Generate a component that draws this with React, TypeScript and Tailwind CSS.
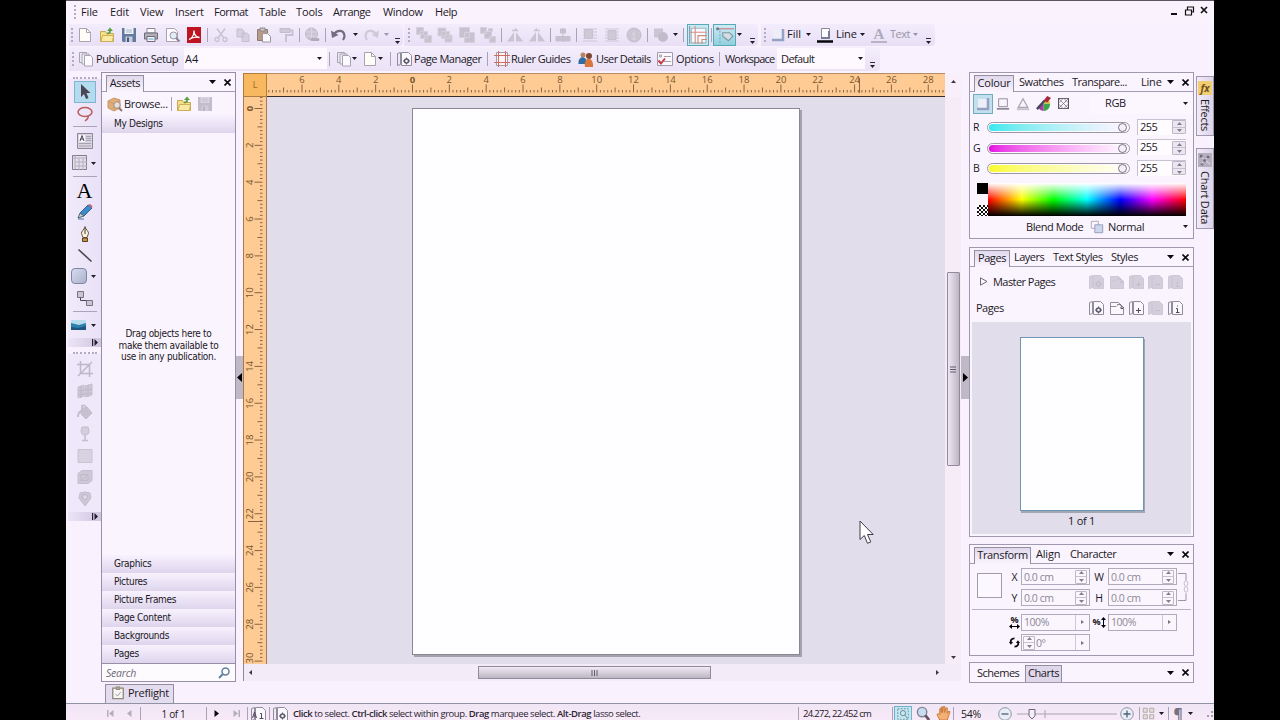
import clsx from "clsx"
import type { ReactNode } from "react"

type BoxProps = { className?: string; children?: ReactNode }

const Slot = ({ className, children }: BoxProps) => (
  <div
    className={clsx(
      "flex shrink-0 items-center justify-center whitespace-nowrap",
      className,
    )}
  >
    {children}
  </div>
)

const Label = ({ className, children }: BoxProps) => (
  <span className={clsx("block shrink-0 whitespace-nowrap", className)}>
    {children}
  </span>
)

const Sep = ({ className }: BoxProps) => (
  <Slot className={className}>
    <div className="h-3.5 w-px bg-[#aaa2b6]" />
  </Slot>
)

const Tri = ({ className }: BoxProps) => (
  <Slot className={className}>
    <svg className="h-[3px] w-[5px] fill-current" viewBox="0 0 5 3">
      <path d="M0 0h5L2.500 3z" />
    </svg>
  </Slot>
)

const Chevron = ({ className }: BoxProps) => (
  <Slot className={clsx("self-stretch pt-[12px]", className)}>
    <svg className="h-2 w-[7px]" viewBox="0 0 7 8">
      <path d="M1 1.500h5" stroke="#332e3c" />
      <path d="M1 4h5L3.500 7z" fill="#221e2b" />
    </svg>
  </Slot>
)

const Grip = ({ className }: BoxProps) => (
  <Slot className={className}>
    <div className="h-3.5 w-0 border-l-2 border-dotted border-[#b3abc2]" />
  </Slot>
)

const Icon = ({ className, children }: BoxProps) => (
  <svg
    className={clsx("size-4 shrink-0", className)}
    viewBox="0 0 16 16"
    fill="none"
    stroke="#8b8596"
  >
    {children}
  </svg>
)

const PageIcon = () => (
  <Icon>
    <path d="M2.500 1.500h7l4 4v9h-11z" fill="#fffdf8" stroke="#a9a3b0" />
    <path d="M9.500 1.500v4h4" stroke="#a9a3b0" />
  </Icon>
)

const FolderIcon = () => (
  <Icon>
    <path d="M1.500 4.500h5l1 2h7v8h-13z" fill="#f8df86" stroke="#c9a955" />
    <path d="M2 14.500l1.500-6h11l-1 6z" fill="#fbeaa2" stroke="#cfae5c" />
    <path d="M8 6.500c3 0 3-1 3-3" stroke="#5da044" strokeWidth="2" />
    <path d="M8 4l3-3.500L14 4z" fill="#5da044" stroke="none" />
  </Icon>
)

const SaveIcon = ({ off = false }: { off?: boolean }) => (
  <Icon>
    <path
      d="M1 1h14v14H2l-1-1z"
      fill={off ? "#c2bdcb" : "#65799e"}
      stroke="none"
    />
    <path d="M3.500 1h9v6h-9z" fill={off ? "#d9d4e1" : "#eef2fa"} stroke="none" />
    <path d="M5 3h6M5 5h6" stroke={off ? "#c6c0ce" : "#a8b2c6"} />
    <path d="M4.500 9.500h7V15h-7z" fill={off ? "#d0cbd7" : "#c5cfdf"} stroke="none" />
    <path d="M6 10.500h2V15H6z" fill={off ? "#b9b3c3" : "#46597d"} stroke="none" />
  </Icon>
)

const PrintIcon = () => (
  <Icon>
    <path d="M4 1.500h8V6H4z" fill="#fff" />
    <path d="M1.500 6h13v6h-13z" fill="#b2afb9" stroke="#6e6a77" />
    <path d="M4 9.500h8v5H4z" fill="#f7f6fa" stroke="#6e6a77" />
    <path d="M5.500 12h5" stroke="#5aa0d0" />
  </Icon>
)

const PreviewIcon = () => (
  <Icon>
    <path d="M1.500 1.500h8l3 3v10h-11z" fill="#fdfbff" stroke="#a9a3b0" />
    <circle cx="8.500" cy="8.500" r="3.500" fill="#e4edf6" stroke="#9a94a2" />
    <path d="M11 11l3.500 3.500" stroke="#8a838e" strokeWidth="2" />
  </Icon>
)

const PdfIcon = () => (
  <Icon>
    <path d="M1 0h14v16H1z" fill="#bd1420" stroke="none" />
    <path
      d="M3 12.500c3-1 5-5 5-9 0 4 2 6.500 5.500 7-3-.8-7-.2-10.500 2z"
      stroke="#fff"
      strokeWidth="1.300"
    />
  </Icon>
)

const CutIcon = () => (
  <Icon>
    <path d="M4 1.500l6.500 9M12 1.500l-6.500 9" stroke="#c8c2d3" strokeWidth="1.500" />
    <circle cx="4" cy="12.500" r="2" stroke="#c8c2d3" strokeWidth="1.300" />
    <circle cx="12" cy="12.500" r="2" stroke="#c8c2d3" strokeWidth="1.300" />
  </Icon>
)

const CopyIcon = () => (
  <Icon>
    <path d="M2 2h5l2 2v6H2zM7 6h4.500L14 8v6.500H7z" fill="#d5cfdf" stroke="#c6bfd1" />
  </Icon>
)

const PasteIcon = () => (
  <Icon>
    <path d="M1.500 2.500h10v11h-10z" fill="#b69a8b" stroke="#94796d" />
    <path d="M4 1h5v3H4z" fill="#ccc6ce" stroke="#8d8791" />
    <path d="M6.500 6.500h5l3 3v5.500h-8z" fill="#fbf9fd" stroke="#9c96a3" />
  </Icon>
)

const BrushIcon = () => (
  <Icon>
    <path d="M2 1.500h10v4H2z" fill="#cfc9d8" stroke="#c4bdcf" />
    <path d="M12 3.500h2.500v4.500H8v7" stroke="#c8c1d2" strokeWidth="2" />
  </Icon>
)

const GlobeIcon = () => (
  <Icon>
    <circle cx="7.500" cy="7" r="6" fill="#c9c5d4" stroke="#c0bacb" />
    <path d="M2 5h11M2 9h11M7.500 1v12" stroke="#dbd6e2" />
    <path d="M8 12.500h2m2 0h2" stroke="#b1abbc" strokeWidth="3" strokeLinecap="round" />
  </Icon>
)

const UndoIcon = ({ redo = false }: { redo?: boolean }) => (
  <Icon className={redo ? "-scale-x-100" : ""}>
    <path
      d="M3 7.500C6 2.500 13 2.500 13.500 9c0 1.500-.5 2.500-1.500 4"
      stroke={redo ? "#cfc9d8" : "#716e80"}
      strokeWidth="2.200"
    />
    <path d="M0 3.500l1 7.500 6.500-3z" fill={redo ? "#cfc9d8" : "#716e80"} stroke="none" />
  </Icon>
)

const StackIcon = ({ front = "back" }: { front?: string }) => (
  <Icon>
    <g fill="#c7c2d0" stroke="#d6d0de">
      {front === "front" && <path d="M1 1h8v8H1zM8 8h7v7H8zM4.500 4.500h8v7h-8z" />}
      {front === "back" && <path d="M.5.500h7v7h-7zM8.500 8.500h7v7h-7zM4.500 4.500h7v7h-7z" />}
      {front === "forward" && <path d="M.5.500h10v10H.5zM5.500 5.500h10v10h-10z" />}
      {front === "rear" && <path d="M.5.500h6v6h-6zM4.500 4.500h7v7h-7zM9.500 9.500h6v6h-6zM8.500 1.500h4v3h-4z" />}
    </g>
  </Icon>
)

const FlipIcon = ({ flipped = false }: { flipped?: boolean }) => (
  <Icon className={flipped ? "-scale-x-100" : ""}>
    <path d="M0 14.500L7 5v9.500zM9 14.500V5l7 9.500z" fill="#c9c3d2" stroke="none" />
    <path d="M5 3.500h5l-2-2" stroke="#c9c3d2" strokeWidth="1.500" />
  </Icon>
)

const AlignIcon = () => (
  <Icon>
    <path d="M5 1.500h6v5H5zM.5 9h15v5.500H.5z" fill="#c6c1cf" stroke="none" />
    <path d="M8 1v14" stroke="#c2bccb" />
  </Icon>
)

const WrapIcon = ({ square = false }: { square?: boolean }) => (
  <Icon>
    <path d="M1 2h14M1 5h14M1 8h14M1 11h14M1 14h14" stroke="#cdc7d6" />
    <path d={square ? "M4 3.500h8v9H4z" : "M2.500 2.500h8v9h-8z"} fill="#cec8d7" stroke="#c6c0d0" />
  </Icon>
)

const BallIcon = () => (
  <Icon>
    <circle cx="8" cy="8" r="7" fill="#cbc6d4" stroke="#c3bdcc" />
    <path d="M8 4v8M6 12h4M6 7h2" stroke="#dcd7e4" />
  </Icon>
)

const MergeIcon = () => (
  <Icon>
    <path d="M1 1.500h9v9H1z" fill="#cbc6d3" stroke="none" />
    <circle cx="10" cy="10" r="5" fill="#c1bccb" stroke="none" />
  </Icon>
)

const GuidesIcon = () => (
  <Icon className="size-[18px]">
    <path d="M2 2h13v13H2z" fill="#f6fafe" stroke="#9eb6c4" />
    <path d="M0 5.500h16M5.500 0v16" stroke="#d99087" />
    <path d="M8 16V8.500h8M11.500 16v-4H16" stroke="#d08c74" />
    <path d="M.5 0v16" stroke="#8aa3b3" />
  </Icon>
)

const SnapIcon = () => (
  <Icon className="size-[18px]">
    <path d="M0 2.500h16" stroke="#c77b84" />
    <path d="M3.500 4v12" stroke="#86aebb" strokeDasharray="2 1" />
    <path d="M6 6h6l3 3-4 4-5-4z" fill="#d5dde4" stroke="#7c98a5" />
    <circle cx="1.500" cy="2.500" r="1.500" fill="#6d8593" stroke="none" />
  </Icon>
)

const FillIcon = () => (
  <Icon>
    <path d="M3 3h10v9.500H3z" fill="#eeeef8" stroke="none" />
    <path d="M13 2v11H2" stroke="#94a1c2" strokeWidth="2.500" />
  </Icon>
)

const LineIcon = () => (
  <Icon>
    <path d="M4.500 1.500h8v9h-8z" fill="#fdfdff" stroke="#8d8b9b" />
    <path d="M12 4v7H4" stroke="#787b94" strokeWidth="2" />
    <path d="M0 14.500h16" stroke="#08060c" strokeWidth="2.500" />
  </Icon>
)

const PagesStackIcon = () => (
  <Icon>
    <path d="M1.500 1.500h7v10h-7z" fill="#eceaf2" stroke="#a8a3b2" />
    <path d="M4 3h7v10H4z" fill="#f3f1f7" stroke="#a8a3b2" />
    <path d="M6.500 4.500h6l2 2v8.500h-8z" fill="#fdfbff" stroke="#a8a3b2" />
  </Icon>
)

const GearPageIcon = ({ off = false }: { off?: boolean }) => (
  <Icon>
    <path d="M.5 2.500l3-1v12l-3 1z" stroke={off ? "#cdc7d6" : "#918c9b"} fill={off ? "#d3cddc" : "none"} />
    <path d="M4.500 1.500h7l3 3v10h-10z" stroke={off ? "#cdc7d6" : "#918c9b"} fill={off ? "#d3cddc" : "#faf7fd"} />
    <circle cx="9.500" cy="10" r="2" stroke={off ? "#c4bece" : "#5d5969"} strokeWidth="1.500" />
    <path d="M9.500 6.500V8M9.500 12v1.500M6 10h1.500M11.500 10H13" stroke={off ? "#c4bece" : "#5d5969"} />
  </Icon>
)

const SheetIcon = ({ off = false, children }: { off?: boolean; children?: ReactNode }) => (
  <Icon>
    <path d="M.5 2.500l3-1v12l-3 1z" stroke={off ? "#cdc7d6" : "#918c9b"} fill={off ? "#d3cddc" : "none"} />
    <path d="M4.500 1.500h7l3 3v10h-10z" stroke={off ? "#cdc7d6" : "#918c9b"} fill={off ? "#d3cddc" : "#faf7fd"} />
    <g stroke={off ? "#c4bece" : "#4e4a5a"}>{children}</g>
  </Icon>
)

const OpenPageIcon = ({ off = false }: { off?: boolean }) => (
  <Icon>
    <path
      d="M1.500 14.500v-12h8l5 5v7zM1.500 6.500h6"
      stroke={off ? "#cdc7d6" : "#918c9b"}
      fill={off ? "#d3cddc" : "#faf7fd"}
    />
    <path d="M8 5c4-1.500 5 1 5 4M11 7.500l2 1.500 2-2" stroke={off ? "#c6c0d0" : "#5a5566"} />
  </Icon>
)

const PageTools = ({ master = false }: { master?: boolean }) => (
  <>
    <Slot className="w-5">
      <GearPageIcon off={master} />
    </Slot>
    <Slot className="w-5">
      <OpenPageIcon off={master} />
    </Slot>
    <Slot className="w-[19px]">
      <SheetIcon off={master}>
        <path d="M9.500 8v5M7 10.500h5" />
      </SheetIcon>
    </Slot>
    <Slot className="w-5">
      <SheetIcon off>
        <path d="M7 10.500h5" />
      </SheetIcon>
    </Slot>
    <Slot className="w-5">
      <SheetIcon off={master}>
        <path d="M8 8.500h1.500v4M8 12.500h3.500M9 6h1" />
      </SheetIcon>
    </Slot>
  </>
)

const RulerGuidesIcon = () => (
  <Icon>
    <path d="M2.500 1.500h11v13h-11z" fill="#fdf5f7" stroke="#a79ba4" />
    <path d="M4.500 0v16M11.500 0v16M0 4.500h16M0 11.500h16" stroke="#cc6c64" />
  </Icon>
)

const UsersIcon = () => (
  <Icon>
    <circle cx="5" cy="4" r="2.500" fill="#b9835f" stroke="none" />
    <path d="M.5 13c-1-9 9-9 8.500 0z" fill="#2f6ea5" stroke="none" />
    <circle cx="11" cy="5" r="3" fill="#7d4630" stroke="none" />
    <path d="M7 16c-2-11 9-11 8 0z" fill="#d8763d" stroke="none" />
  </Icon>
)

const OptionsIcon = () => (
  <Icon>
    <path d="M.5 1.500h15v13H.5z" fill="#fbf8fd" stroke="#a19ca9" />
    <path d="M2.500 4h2v2h-2zM7 5.500h7M7 10.500h7" stroke="#a39eac" />
    <path d="M1.500 9.500l2.500 3 4-5" stroke="#c43a46" strokeWidth="2" />
  </Icon>
)

const BrowseIcon = () => (
  <Icon>
    <path d="M1 5l6-3 6 2v8l-6 3-6-3z" fill="#e0ad77" stroke="#c99a69" />
    <path d="M1 5l6 3 6-4M7 8v6" stroke="#c99a69" />
    <circle cx="10" cy="9" r="3.200" fill="#e6dfdf" stroke="#a39186" />
    <path d="M12 12l3 3" stroke="#8b776d" strokeWidth="2" />
  </Icon>
)

const PanelButtons = () => (
  <>
    <svg className="h-[4px] w-[7px]" viewBox="0 0 7 4">
      <path d="M0 0h7L3.500 4z" fill="#0c0812" />
    </svg>
    <svg className="ml-[8px] size-[7px]" viewBox="0 0 7 7">
      <path d="M.5.5l6 6M6.500.5l-6 6" stroke="#0c0812" strokeWidth="1.600" />
    </svg>
  </>
)

const ActiveTab = ({ className, children }: BoxProps) => (
  <div
    className={clsx(
      "mt-0.5 flex h-[17px] shrink-0 items-center justify-center self-start border border-b-0 border-[#958ea3] bg-gradient-to-b from-[#e0d9ec] to-[#faf4fe] pb-[2px] whitespace-nowrap",
      className,
    )}
  >
    {children}
  </div>
)

const MenuBar = () => (
  <div className="flex h-6 items-center border-t border-[#5b5562] bg-[#faf3fe] pb-[2px] pl-[3px] tracking-[-0.15px]">
    <Grip className="w-3" />
    <Label className="w-[29px]">File</Label>
    <Label className="w-[30px]">Edit</Label>
    <Label className="w-[35px]">View</Label>
    <Label className="w-[39px]">Insert</Label>
    <Label className="w-[45px] tracking-[-0.5px]">Format</Label>
    <Label className="w-[37px]">Table</Label>
    <Label className="w-[37px]">Tools</Label>
    <Label className="w-[50px] tracking-[-0.5px]">Arrange</Label>
    <Label className="w-[52px] tracking-[-0.3px]">Window</Label>
    <Label className="w-[30px] tracking-[-0.4px]">Help</Label>
    <svg className="mt-[-2px] mr-[5px] ml-auto h-3 w-[38px]" viewBox="0 0 38 12" fill="none" stroke="#111">
      <path d="M0 9h6" strokeWidth="2" />
      <path d="M16.500 5V2h6v5h-2M14.500 5h6v5h-6z" strokeWidth="1.200" />
      <path d="M30 2l6 6M36 2l-6 6" strokeWidth="1.700" />
    </svg>
  </div>
)

const MainToolbar = () => (
  <div className="flex h-[22px] items-center">
    <div className="ml-[3px] flex h-full items-center rounded-r bg-gradient-to-b from-[#f3ecfc] to-[#e8dff5] pb-px">
      <Grip className="w-[5px]" />
      <Slot className="w-[22px]"><PageIcon /></Slot>
      <Slot className="w-[22px]"><FolderIcon /></Slot>
      <Slot className="w-[22px]"><SaveIcon /></Slot>
      <Slot className="w-[22px]"><PrintIcon /></Slot>
      <Slot className="w-[21px]"><PreviewIcon /></Slot>
      <Slot className="w-[21px]"><PdfIcon /></Slot>
      <Sep className="w-[6px]" />
      <Slot className="w-[22px]"><CutIcon /></Slot>
      <Slot className="w-[21px]"><CopyIcon /></Slot>
      <Slot className="w-[22px]"><PasteIcon /></Slot>
      <Slot className="w-[22px]"><BrushIcon /></Slot>
      <Sep className="w-1" />
      <Slot className="w-[22px]"><GlobeIcon /></Slot>
      <Sep className="w-[5px]" />
      <Slot className="w-[21px]"><UndoIcon /></Slot>
      <Tri className="w-3" />
      <Slot className="w-5"><UndoIcon redo /></Slot>
      <Tri className="w-[10px] text-[#9e97aa]" />
      <Chevron className="w-3" />
    </div>
    <div className="ml-px flex h-full items-center rounded-r bg-gradient-to-b from-[#f3ecfc] to-[#e8dff5] pb-px">
      <Grip className="w-[9px]" />
      <Slot className="w-[21px]"><StackIcon /></Slot>
      <Slot className="w-[22px]"><StackIcon front="front" /></Slot>
      <Slot className="w-[21px]"><StackIcon front="forward" /></Slot>
      <Slot className="w-[22px]"><StackIcon front="rear" /></Slot>
      <Sep className="w-[5px]" />
      <Slot className="w-[22px]"><FlipIcon /></Slot>
      <Slot className="w-[22px]"><FlipIcon flipped /></Slot>
      <Sep className="w-1" />
      <Slot className="w-[22px]"><AlignIcon /></Slot>
      <Sep className="w-[5px]" />
      <Slot className="w-[22px]"><WrapIcon /></Slot>
      <Slot className="w-[22px]"><WrapIcon square /></Slot>
      <Slot className="w-[22px]"><BallIcon /></Slot>
      <Sep className="w-[5px]" />
      <Slot className="w-[21px]"><MergeIcon /></Slot>
      <Tri className="w-[9px]" />
      <Sep className="w-[7px]" />
      <Slot className="h-[22px] w-[22px] border border-[#5aa9b9] bg-[#c6e9f4]"><GuidesIcon /></Slot>
      <Sep className="w-1" />
      <Slot className="h-[22px] w-[23px] border border-[#5aa9b9] bg-gradient-to-b from-[#cdeaf5] to-[#8fd0dd]"><SnapIcon /></Slot>
      <Tri className="w-[7px]" />
      <Chevron className="ml-[3px] w-3" />
    </div>
    <div className="ml-[3px] flex h-full items-center rounded-r bg-gradient-to-b from-[#f3ecfc] to-[#e8dff5] pb-px">
      <Grip className="w-[8px]" />
      <Slot className="w-[18px]"><FillIcon /></Slot>
      <Label className="-mt-px w-[17px]">Fill</Label>
      <Tri className="w-[8px]" />
      <Slot className="ml-1 w-[18px]"><LineIcon /></Slot>
      <Label className="-mt-px ml-[2px] w-[22px] tracking-[-0.2px]">Line</Label>
      <Tri className="w-[8px]" />
      <Slot className="ml-1 w-[18px] flex-col text-[#b0aaba]">
        <span className="h-[14px] font-['Liberation_Serif',serif] text-[15px]/[15px] font-bold">A</span>
        <div className="h-[2px] w-4 bg-[#b9b4c3]" />
      </Slot>
      <Label className="-mt-px ml-[2px] w-[22px] tracking-[-0.5px] text-[#9a94a5]">Text</Label>
      <Tri className="w-[7px] text-[#9a94a5]" />
      <Chevron className="ml-[2px] w-[14px]" />
    </div>
  </div>
)

const SetupToolbar = () => (
  <div className="flex h-[26px] items-center">
    <div className="ml-[3px] flex h-[24px] items-center rounded-r bg-gradient-to-b from-[#f3edfc] to-[#ebe2f6] pb-px">
      <Grip className="w-[7px]" />
      <Slot className="w-5"><PagesStackIcon /></Slot>
      <Label className="w-[88px] tracking-[-0.44px]">Publication Setup</Label>
      <div className="flex h-[21px] w-[143px] items-center bg-[#fdf9ff] pl-px">
        <span className="grow">A4</span>
        <Tri className="w-4" />
      </div>
      <Sep className="w-1" />
      <Slot className="ml-1 w-[17px]"><PagesStackIcon /></Slot>
      <Tri className="w-[5px]" />
      <Slot className="ml-1 w-[17px]"><PageIcon /></Slot>
      <Tri className="w-[5px]" />
      <Sep className="w-[14px]" />
      <Slot className="w-[16px]"><GearPageIcon /></Slot>
      <Label className="ml-px w-[69px] tracking-[-0.47px]">Page Manager</Label>
      <Sep className="w-[9px]" />
      <Slot className="w-[19px]"><RulerGuidesIcon /></Slot>
      <Label className="w-[65px] tracking-[-0.5px]">Ruler Guides</Label>
      <Slot className="w-[20px]"><UsersIcon /></Slot>
      <Label className="w-[59px] tracking-[-0.6px]">User Details</Label>
      <Slot className="w-[20px]"><OptionsIcon /></Slot>
      <Label className="ml-px w-[41px] tracking-[-0.4px]">Options</Label>
      <Sep className="w-[4px]" />
      <Label className="ml-1 w-[52px] tracking-[-0.8px]">Workspace</Label>
      <div className="flex h-[21px] w-[88px] items-center bg-[#fdf9ff] pl-1">
        <span className="grow tracking-[-0.6px]">Default</span>
        <Tri className="w-[10px]" />
      </div>
      <Chevron className="w-[15px]" />
    </div>
  </div>
)

const Divider = ({ className }: BoxProps) => (
  <div className={clsx("h-px w-6 shrink-0 bg-[#aba3b9]", className)} />
)

const MoreTools = ({ className }: BoxProps) => (
  <div
    className={clsx(
      "flex h-[9px] w-full shrink-0 items-center justify-end bg-gradient-to-r from-[#ece4f8] to-[#cfc6de] pr-[3px]",
      className,
    )}
  >
    <svg className="h-[7px] w-[6px]" viewBox="0 0 6 7">
      <path d="M0 0h1.200v7H0zM2.500 0v7L6 3.500z" fill="#241f2e" />
    </svg>
  </div>
)

const ToolBox = () => (
  <div className="flex w-[33px] shrink-0 flex-col items-center text-[#221e2b]">
    <div className="mt-[5px] h-0 w-6 border-t-2 border-dotted border-[#b3abc2]" />
    <div className="flex h-[264px] w-full shrink-0 flex-col items-center bg-gradient-to-r from-[#f1eafb] to-[#e9e1f6]">
      <Slot className="mt-[2px] h-[22px] w-[22px] border border-[#7fb5d3] bg-[#b3dcef]">
        <Icon>
          <path d="M4 0v13l3-3 2 5 2.500-1-2-5h4z" fill="#4b4757" stroke="none" />
        </Icon>
      </Slot>
      <Slot className="h-[22px]">
        <Icon>
          <ellipse cx="8" cy="6" rx="7" ry="4.500" stroke="#b95c5b" strokeWidth="1.500" />
          <path d="M11 9.500c1 2-1 4-3 5.500" stroke="#b95c5b" strokeWidth="1.500" />
        </Icon>
      </Slot>
      <Divider className="mt-px" />
      <Slot className="mt-1 h-[20px]">
        <Icon>
          <path d="M.5.5h15v15H.5z" fill="#d7d3df" stroke="#8e8999" />
          <path d="M2 2h6v7H2z" fill="#f9f7fb" stroke="none" />
          <path d="M3 8l2-5.500L7 8M3.700 6h2.600" stroke="#4a4655" />
          <path d="M9 3.500h5M9 5.500h5M9 7.500h5M2 10.500h12M2 13h12" stroke="#a8a3b2" />
        </Icon>
      </Slot>
      <Slot className="h-[24px] w-full justify-start pl-[4px]">
        <Icon>
          <path d="M.5.5h14v14H.5z" fill="#e3dfeb" stroke="#817c8c" />
          <path d="M.5 3h14M3 .5v14M7 3v12M11 3v12M3 7h12M3 11h12" stroke="#b4afbe" />
        </Icon>
        <Tri className="ml-[3px]" />
      </Slot>
      <Divider className="mt-px" />
      <Slot className="mt-[4px] h-[20px] font-['Liberation_Serif',serif] text-[22px]/[20px] text-black">
        A
      </Slot>
      <Slot className="h-[22px]">
        <Icon>
          <path d="M3 9l8-8 4 3-8 8z" fill="#3f8acb" stroke="#2e6398" />
          <path d="M11 1l2-1 2.500 2L15 4z" fill="#c46a74" stroke="none" />
          <path d="M3 9l-2 5 6-2z" fill="#c5cfdb" stroke="#55626f" />
          <path d="M1 15h6" stroke="#4577a4" />
        </Icon>
      </Slot>
      <Slot className="h-[21px]">
        <Icon>
          <path d="M8 .5c.5 3 4 5 3.500 7l-1.500 4H6l-1.500-4C4 5.500 7.500 3.500 8 .5z" fill="#fcf3df" stroke="#655641" />
          <path d="M8 2v6" stroke="#453b31" />
          <path d="M5.500 12h5v3.500h-5z" fill="#c59640" stroke="#594121" />
        </Icon>
      </Slot>
      <Slot className="h-[21px]">
        <Icon>
          <path d="M1.500 2.500l13 12" stroke="#4a4553" strokeWidth="1.600" />
        </Icon>
      </Slot>
      <Slot className="h-[22px] w-full justify-start pl-[3px]">
        <div className="size-4 rounded-sm border border-[#7d86a4] bg-gradient-to-br from-[#d7dcec] to-[#aab2cf]" />
        <Tri className="ml-[4px]" />
      </Slot>
      <Slot className="mt-px h-[22px]">
        <Icon>
          <path d="M.5.5h6v6h-6zM9.500 9.500h6v5h-6z" fill="#c9c6d4" stroke="#777284" />
          <path d="M3.500 6.500v3h6" stroke="#4a4655" />
        </Icon>
      </Slot>
      <Divider className="mt-px" />
      <Slot className="mt-1 h-[18px] w-full justify-start pl-[3px]">
        <Icon>
          <path d="M0 3h15v10H0z" fill="#2d7fae" stroke="none" />
          <path d="M0 3h15v3L8 8 0 6z" fill="#b9dbec" stroke="none" />
          <path d="M0 10l7 1 8-2v4H0z" fill="#1d567f" stroke="none" />
        </Icon>
        <Tri className="ml-[4px]" />
      </Slot>
    </div>
    <MoreTools className="-mt-[5px]" />
    <div className="mt-[5px] h-0 w-6 border-t-2 border-dotted border-[#b3abc2]" />
    <div className="flex w-full flex-col items-center gap-[5.7px] bg-[#efe7fa] pt-[7px] pb-[5px]">
      <Icon>
        <path d="M3.500 0v12.500H16M0 3.500h12.500V16M1 15L15 1" stroke="#bdb7c8" strokeWidth="1.500" />
      </Icon>
      <Icon>
        <path d="M1 4l6-2v11l-6 2zM8 3l7-2v11l-7 2z" fill="#cdc7d6" stroke="#c6c0d0" />
        <path d="M1 8l14-2M1 12l14-2M4 3v12M11 2v12" stroke="#bfb9c9" />
      </Icon>
      <Icon>
        <path d="M4 6l5-4 6 7-6 6-5-5z" fill="#c6c0d0" stroke="#c1bbcb" />
        <path d="M1 13c0-4 1-5 3-6M5 7V2l3-1" stroke="#c1bbcb" strokeWidth="1.800" />
      </Icon>
      <Icon>
        <path d="M5 1h6l1 4c0 3-2 4-4 4S4 8 4 5z" fill="#d3cddc" stroke="#c3bdcd" />
        <path d="M8 9v6M5 14.500h6" stroke="#c3bdcd" strokeWidth="1.500" />
      </Icon>
      <Icon>
        <path d="M1 1.500h14v13H1z" fill="#d7d1e0" stroke="#cac4d4" />
      </Icon>
      <Icon>
        <path d="M1 4.500l4-3h10v10l-4 3H1z" fill="#cdc7d6" stroke="#c5bfcf" />
        <path d="M4 5.500h7v6H4zM4 12l7-7" stroke="#bfb9c9" />
      </Icon>
      <Icon>
        <path d="M8 15L2 7l1-5 5-1 5 1 1 5z" fill="#ccc6d6" stroke="#c4bece" />
        <circle cx="8" cy="6" r="2.500" fill="#dfdae6" stroke="#bab4c4" />
      </Icon>
    </div>
    <MoreTools />
  </div>
)

const DRAWERS = [
  "Graphics",
  "Pictures",
  "Picture Frames",
  "Page Content",
  "Backgrounds",
  "Pages",
]

const Drawer = ({ children }: BoxProps) => (
  <div className="flex h-[18px] shrink-0 items-center bg-gradient-to-b from-[#f8f2fe] to-[#ded5ec] pb-px pl-3 font-['DejaVu_Sans_Condensed','Open_Sans',sans-serif] text-[10px] tracking-[-0.3px]">
    {children}
  </div>
)

const AssetsPanel = () => (
  <div className="flex h-[610px] w-[135px] shrink-0 flex-col border border-[#978fa8] bg-[#faf4fe]">
    <div className="flex h-[19px] shrink-0 items-center border-b border-[#a59db4] pr-[4px]">
      <ActiveTab className="ml-[4px] w-[38px] tracking-[-0.4px]">Assets</ActiveTab>
      <div className="ml-auto flex items-center"><PanelButtons /></div>
    </div>
    <div className="flex h-[23px] shrink-0 items-center pl-[4px]">
      <Slot className="w-[17px]"><BrowseIcon /></Slot>
      <Label className="w-[44px] pl-px tracking-[-0.35px]">Browse...</Label>
      <Sep className="w-[9px]" />
      <Slot className="w-[16px]"><FolderIcon /></Slot>
      <Slot className="ml-1 w-[18px]"><SaveIcon off /></Slot>
    </div>
    <Drawer>My Designs</Drawer>
    <p className="grow pt-[195px] text-center font-['DejaVu_Sans_Condensed','Open_Sans',sans-serif] text-[10px]/[11.7px] tracking-[-0.3px]">
      Drag objects here to
      <br />
      make them available to
      <br />
      use in any publication.
    </p>
    {DRAWERS.map((name) => (
      <Drawer key={name}>{name}</Drawer>
    ))}
    <div className="flex h-[18px] shrink-0 items-center border-t border-[#978fa8] bg-[#fefbff] pr-[5px] pl-1 text-[10.5px] text-[#6f6978]">
      <span className="grow tracking-[-0.2px] italic">Search</span>
      <svg className="size-3" viewBox="0 0 12 12" fill="none" stroke="#5f7fa3">
        <circle cx="7.500" cy="4.500" r="3.500" strokeWidth="1.500" />
        <path d="M5 7l-4 4" strokeWidth="2" />
      </svg>
    </div>
  </div>
)

const UNIT = 18.42

const range = (from: number, to: number) =>
  Array.from({ length: to - from + 1 }, (_, i) => from + i)

// five ticks to the centimetre, numbers on every second one
const tickLength = (i: number) => {
  if (i % 10 === 0) {
    return 8
  }

  return i % 5 === 0 ? 5 : 2.5
}

const TopRuler = () => (
  <svg
    className="h-6 w-[678px] shrink-0 border-y border-t-[#b98d63] border-b-[#3a2c26] bg-[#fdcb93]"
    viewBox="0 0 678 22"
    stroke="#8a6440"
  >
    {range(-39, 144).map((i) => {
      const x = 145.5 + (i * UNIT) / 5
      return <path key={i} d={`M${x} ${18.5 - tickLength(i)}V18.500`} />
    })}
    <path d="M592.500 4v15" />
    {range(-3, 14).map((i) => (
      <text
        key={i}
        x={145.5 + i * 2 * UNIT}
        y="9"
        textAnchor="middle"
        fontSize="9.500"
        fontWeight={i === 0 ? 700 : 400}
        fill="#7b542d"
        stroke="none"
      >
        {Math.abs(i * 2)}
      </text>
    ))}
  </svg>
)

const SideRuler = () => (
  <svg
    className="h-[567px] w-6 shrink-0 border-x border-[#a97a4c] bg-[#fdcb93]"
    viewBox="0 0 22 567"
    stroke="#8a6440"
  >
    {range(-3, 150).map((i) => {
      const y = 11.5 + (i * UNIT) / 5
      return <path key={i} d={`M${18.5 - tickLength(i)} ${y}H18.500`} />
    })}
    <path d="M4 424.500h15" />
    {range(0, 15).map((i) => (
      <text
        key={i}
        transform={`translate(9 ${Math.min(11.5 + i * 2 * UNIT, 561)}) rotate(-90)`}
        textAnchor="middle"
        fontSize="9.500"
        fontWeight={i === 0 ? 700 : 400}
        fill="#7b542d"
        stroke="none"
      >
        {i * 2}
      </text>
    ))}
  </svg>
)

const Splitter = ({ right = false }: { right?: boolean }) => (
  <div className={clsx("flex shrink-0 flex-col pt-[284px]", right ? "w-2" : "w-[7px]")}>
    <div className="flex h-[43px] items-center justify-center bg-[#bfb9c7]">
      <svg className={clsx("h-[9px] w-[5px]", right && "rotate-180")} viewBox="0 0 5 9">
        <path d="M5 0v9L0 4.500z" />
      </svg>
    </div>
  </div>
)

const Workspace = () => (
  <div className="relative flex w-[718px] shrink-0 flex-col">
    <div className="mt-px flex">
      <div className="flex h-6 w-6 items-center justify-center border border-[#b07d40] bg-[#f7b85f] text-[9px] text-[#9b6b28]">
        L
      </div>
      <TopRuler />
      <div className="flex h-6 w-4 justify-center bg-[#f8effb] pt-[7px]">
        <svg className="h-1 w-[5px]" viewBox="0 0 5 4"><path d="M0 3h5L2.500 0z" fill="#3b3546" /></svg>
      </div>
    </div>
    <div className="flex h-[567px]">
      <SideRuler />
      <div className="w-[678px] bg-[#e2ddea] pt-[11px] pl-[145px]">
        <div className="h-[547px] w-[388px] border border-[#8a8694] bg-[#fefdff] shadow-[2px_2px_0_#a5a1ad]" />
      </div>
      <div className="flex w-4 flex-col items-center bg-[#f5ecf8] pt-[175px]">
        <div className="flex h-[194px] w-[13px] items-center justify-center rounded-[1px] border border-[#918a9d] bg-gradient-to-r from-[#eee7f3] to-[#bdb6c5]">
          <svg className="h-[7px] w-[6px]" viewBox="0 0 6 7"><path d="M0 1h6M0 3.500h6M0 6h6" stroke="#625c6d" /></svg>
        </div>
        <svg className="mt-auto mb-[5px] h-[3px] w-[5px]" viewBox="0 0 5 3"><path d="M0 0h5L2.500 3z" fill="#3b3546" /></svg>
      </div>
    </div>
    <div className="flex h-[17px] w-[718px] items-center border-l border-[#8f889c] bg-[#f3ebf7] pl-[5px]">
      <svg className="h-[5px] w-[3px]" viewBox="0 0 3 5"><path d="M3 0v5L0 2.500z" fill="#3b3546" /></svg>
      <div className="ml-[226px] flex h-[13px] w-[233px] items-center justify-center border border-[#918a9d] bg-gradient-to-b from-[#f2ebf5] to-[#bcb6c4]">
        <svg className="h-[6px] w-[7px]" viewBox="0 0 7 6"><path d="M1 0v6M3.500 0v6M6 0v6" stroke="#625c6d" /></svg>
      </div>
      <svg className="ml-[225px] h-[5px] w-[3px]" viewBox="0 0 3 5"><path d="M0 0v5l3-2.500z" fill="#3b3546" /></svg>
    </div>
    {/* mouse pointer */}
    <svg className="absolute top-[448px] left-[616px] h-[25px] w-[15px]" viewBox="0 0 15 25">
      <path
        d="M1 1v18.500l4.300-4 3.200 7.800 3.300-1.400-3.300-7.400h5.700z"
        fill="#fff"
        stroke="#3f3b48"
      />
    </svg>
  </div>
)

const Slider = ({ name, track }: { name: string; track: string }) => (
  <div className="flex h-[20.6px] items-center pr-[7px] pl-[3px]">
    <span className="w-[14px] text-[10.5px]">{name}</span>
    <div className="mt-px flex h-[11px] w-[143px] items-center rounded-full border border-[#9c96a5] bg-[#fdfaff] p-px">
      <div className={clsx("h-[7px] grow rounded-l-full bg-gradient-to-r", track)} />
      <div className="mr-px size-[9px] rounded-full border border-[#78727f] bg-[#f5f0f8]" />
    </div>
    <div className="-mt-px ml-auto flex h-4 w-[49px] items-center justify-between border-t border-l border-[#c8c1d1] bg-[#fefcff] pl-0.5">
      <span className="-mt-px tracking-[-0.5px]">255</span>
      <Spin className="w-[14px] bg-[#ece6f2]" />
    </div>
  </div>
)

const Spin = ({ className }: BoxProps) => (
  <div
    className={clsx(
      "flex h-[14px] flex-col items-center justify-around rounded-[1px] border border-[#bdb7c6] text-[#837d8e]",
      className,
    )}
  >
    <svg className="h-[3px] w-[5px] fill-current" viewBox="0 0 5 3"><path d="M0 3h5L2.500 0z" /></svg>
    <div className="h-px w-full bg-[#c8c2d0]" />
    <svg className="h-[3px] w-[5px] fill-current" viewBox="0 0 5 3"><path d="M0 0h5L2.500 3z" /></svg>
  </div>
)

const Panel = ({ className, children }: BoxProps) => (
  <section
    className={clsx(
      "flex shrink-0 flex-col border border-[#a098ae] bg-[#faf4fe]",
      className,
    )}
  >
    {children}
  </section>
)

const TabRow = ({ children }: BoxProps) => (
  <div className="flex h-[19px] shrink-0 items-center border-b border-[#a59db4] pr-[4px] pl-[4px]">
    {children}
    <div className="ml-auto flex items-center"><PanelButtons /></div>
  </div>
)

const ColourPanel = () => (
  <Panel className="h-[167px]">
    <TabRow>
      <ActiveTab className="w-[40px] tracking-[-0.2px]">Colour</ActiveTab>
      <Label className="ml-[5px] w-[53px] tracking-[-0.45px]">Swatches</Label>
      <Label className="w-[69px] tracking-[-0.5px]">Transpare...</Label>
      <Label className="-mr-2 tracking-[-0.2px]">Line</Label>
    </TabRow>
    <div className="flex h-[22px] shrink-0 items-center pt-px pl-[3px]">
      <Slot className="size-5 border border-[#73a9c1] bg-[#c3e0ee]"><FillIcon /></Slot>
      <Slot className="w-5">
        <Icon className="size-[14px]">
          <path d="M3 2h10v9H3z" fill="#f6f3f9" />
          <path d="M1 13.500h14" strokeWidth="2" />
        </Icon>
      </Slot>
      <Slot className="w-5">
        <Icon className="size-[14px]">
          <path d="M8 2l5.500 10h-11z" stroke="#aaa4b4" strokeWidth="1.500" />
          <path d="M1 14h14" stroke="#c5bfce" strokeWidth="2" />
        </Icon>
      </Slot>
      <Slot className="w-5">
        <Icon className="size-[15px]">
          <path d="M8 16V8h7c0 5-3 8-7 8z" fill="#3ba54b" stroke="none" />
          <path d="M8 8h7c0-3-3-5-5-5z" fill="#e7ba30" stroke="none" />
          <path d="M8 8L2 11c1 3 3 5 6 5z" fill="#a83ea2" stroke="none" />
          <path d="M1 14l8-9" stroke="#404763" strokeWidth="2.500" />
          <path d="M8 5l4-5 4 2-4 5z" fill="#a7283a" stroke="none" />
        </Icon>
      </Slot>
      <Slot className="w-5">
        <Icon className="size-[11px]">
          <path d="M.5.5h15v15H.5z" stroke="#3b3641" strokeWidth="1.500" />
          <path d="M0 8l8-8M0 16L16 0M8 16l8-8M0 0l16 16M8 0l8 8M0 8l8 8" stroke="#6b6671" />
        </Icon>
      </Slot>
      <div className="ml-[17px] flex h-5 grow items-center bg-[#fcf7ff] pr-[5px] pb-px pl-[15px]">
        <span className="grow tracking-[-0.4px]">RGB</span>
        <Tri />
      </div>
    </div>
    <div className="mt-[3px] flex flex-col">
      <Slider name="R" track="from-[#31e9ee] to-[#f8f4ff]" />
      <Slider name="G" track="from-[#e500e2] to-[#fdf2ff]" />
      <Slider name="B" track="from-[#fafa24] to-[#fffdf2]" />
    </div>
    <div className="mt-[4px] flex h-[33px] shrink-0 pr-[7px] pl-[7px]">
      <div className="flex w-[11px] flex-col justify-between">
        <div className="size-[11px] bg-black" />
        <div className="size-[11px] bg-[repeating-conic-gradient(#111_0_25%,#fff_0_50%)] bg-[length:4px_4px]" />
      </div>
      <div className="grow bg-[linear-gradient(to_bottom,#fff_0%,transparent_50%,#000_100%),linear-gradient(to_right,#f00_0%,#ff0_17%,#0f0_33%,#0ff_50%,#00f_67%,#f0f_83%,#f00_100%)]" />
    </div>
    <div className="flex grow items-center pr-[5px] pl-[56px]">
      <Label className="w-[64px] tracking-[-0.45px]">Blend Mode</Label>
      <Icon className="size-[14px]">
        <path d="M1.500 1.500h8v8h-8z" stroke="#a9a4b4" />
        <path d="M5.500 5.500h9v9h-9z" fill="#ccd6ee" stroke="#8e98b5" />
      </Icon>
      <span className="ml-1 grow tracking-[-0.4px]">Normal</span>
      <Tri />
    </div>
  </Panel>
)

const PagesPanel = () => (
  <Panel className="mt-2 h-[290px]">
    <TabRow>
      <ActiveTab className="w-[36px] tracking-[-0.4px]">Pages</ActiveTab>
      <Label className="ml-[4px] w-[39px] tracking-[-0.5px]">Layers</Label>
      <Label className="w-[58px] tracking-[-0.45px]">Text Styles</Label>
      <Label className="tracking-[-0.45px]">Styles</Label>
    </TabRow>
    <div className="flex h-[29px] shrink-0 items-center pr-[7px] pl-[10px]">
      <svg className="mr-[5px] h-[9px] w-2" viewBox="0 0 8 9">
        <path d="M.5.8v7.400L7 4.500z" fill="none" stroke="#6f6978" />
      </svg>
      <span className="grow tracking-[-0.55px]">Master Pages</span>
      <PageTools master />
    </div>
    <div className="flex h-[23px] shrink-0 items-center pr-[7px] pl-[6px]">
      <span className="grow tracking-[-0.5px]">Pages</span>
      <PageTools />
    </div>
    <div className="m-[2px] mt-[3px] flex grow flex-col items-center bg-[#e2ddea] pt-[15px]">
      <div className="h-[174px] w-[124px] shrink-0 border border-[#6f96b0] bg-[#fefdff] shadow-[1px_2px_0_#a3a6b4]" />
      <span className="mt-[3px] tracking-[-0.3px]">1 of 1</span>
    </div>
  </Panel>
)

const Field = ({ className, children }: BoxProps) => (
  <div
    className={clsx(
      "flex h-[17px] shrink-0 items-center justify-between border border-[#b1aabc] bg-[#fbf6fe] px-0.5 text-[10.5px] tracking-[-0.45px] text-[#8c8696]",
      className,
    )}
  >
    {children}
  </div>
)

const DropStub = () => (
  <div className="-mr-0.5 flex h-[15px] w-[14px] items-center justify-center border-l border-[#cdc7d5]">
    <svg className="h-1 w-[3px]" viewBox="0 0 3 4"><path d="M0 0v4l3-2z" fill="#777" /></svg>
  </div>
)

const TransformPanel = () => (
  <Panel className="mt-[7px] h-[112px] text-[10.5px]">
    <TabRow>
      <ActiveTab className="w-[57px] text-[11px] tracking-[-0.35px]">Transform</ActiveTab>
      <Label className="ml-[5px] w-[34px] text-[11px] tracking-[-0.2px]">Align</Label>
      <Label className="text-[11px] tracking-[-0.45px]">Character</Label>
    </TabRow>
    <div className="flex h-[45px] shrink-0 items-center pt-px pl-[7px]">
      <div className="-mt-1 size-[25px] border border-[#a39dab] bg-[#fcf8ff]" />
      <div className="ml-[6px] flex flex-col gap-1">
        <div className="flex items-center">
          <Slot className="w-[13px]">X</Slot>
          <Field className="w-[69px]">0.0 cm<Spin className="w-3" /></Field>
          <Slot className="w-[18px]">W</Slot>
          <Field className="w-[69px]">0.0 cm<Spin className="w-3" /></Field>
        </div>
        <div className="flex items-center">
          <Slot className="w-[13px]">Y</Slot>
          <Field className="w-[69px]">0.0 cm<Spin className="w-3" /></Field>
          <Slot className="w-[18px]">H</Slot>
          <Field className="w-[69px]">0.0 cm<Spin className="w-3" /></Field>
        </div>
      </div>
      <svg className="ml-px h-8 w-3" viewBox="0 0 12 32" fill="none" stroke="#9b95a6">
        <path d="M0 2.500h8v7M0 29.500h8v-7" />
        <ellipse cx="8" cy="12.500" rx="1.800" ry="2.800" stroke="#c5bfce" />
        <ellipse cx="8" cy="18.500" rx="1.800" ry="2.800" stroke="#c5bfce" />
      </svg>
    </div>
    <div className="mx-[2px] h-px shrink-0 bg-[#b9b2c4]" />
    <div className="flex h-[24px] items-center pl-[38px]">
      <Slot className="w-[13px] flex-col">
        <span className="text-[9px]/[8px] font-bold">%</span>
        <svg className="h-[5px] w-[11px]" viewBox="0 0 11 5"><path d="M0 2.500L3 0v2h5V0l3 2.500L8 5V3H3v2z" /></svg>
      </Slot>
      <Field className="w-[69px]">100%<DropStub /></Field>
      <Slot className="w-[18px]">
        <span className="text-[9px] font-bold">%</span>
        <svg className="h-[11px] w-[5px]" viewBox="0 0 5 11"><path d="M2.500 0L5 3H3v5h2l-2.500 3L0 8h2V3H0z" /></svg>
      </Slot>
      <Field className="w-[69px]">100%<DropStub /></Field>
    </div>
    <div className="flex h-[17px] items-center pl-[38px]">
      <Slot className="w-[13px]">
        <svg className="size-[11px]" viewBox="0 0 12 12" fill="none" stroke="#0c0812" strokeWidth="2">
          <path d="M6 1.500C2.500 1.500 1.500 4 2 6.500M6 10.500c3.500 0 4.500-2.500 4-5" />
          <path d="M0 5.500h4.500L2 8.500zM7.500 6.500H12L9.800 3.500z" fill="#0c0812" stroke="none" />
        </svg>
      </Slot>
      <Field className="w-[69px]">
        <Spin className="-ml-px w-[12px]" />
        <span className="grow pl-px">0°</span>
        <DropStub />
      </Field>
    </div>
  </Panel>
)

const SideTab = ({ className, children }: BoxProps) => (
  <div
    className={clsx(
      "flex w-[18px] flex-col items-center border border-[#a098ae] bg-gradient-to-r from-[#f2ebf9] to-[#dcd4e8] pt-1",
      className,
    )}
  >
    {children}
  </div>
)

const RightDock = () => (
  <>
    <div className="flex w-[225px] shrink-0 flex-col">
      <ColourPanel />
      <PagesPanel />
      <TransformPanel />
      <Panel className="mt-1.5 h-[21px]">
        <div className="flex grow items-center pr-[4px] pl-[7px]">
          <Label className="w-[48px] tracking-[-0.5px]">Schemes</Label>
          <div className="flex h-[17px] w-[37px] items-center justify-center self-end border border-b-0 border-[#958ea3] bg-[#dfd8ea] pb-[2px] tracking-[-0.4px]">
            Charts
          </div>
          <div className="ml-auto flex items-center"><PanelButtons /></div>
        </div>
      </Panel>
    </div>
    <div className="ml-0.5 flex flex-col pt-[4px]">
      <SideTab className="h-[60px]">
        <div className="flex size-[14px] items-center justify-center bg-[#f2cd72] text-[10px] font-bold text-[#6d531c] italic">
          fx
        </div>
        <span className="mt-[4px] text-[11px] tracking-[-0.3px] [writing-mode:vertical-rl]">Effects</span>
      </SideTab>
      <SideTab className="mt-[12px] h-[81px]">
        <Icon className="size-[14px]">
          <path d="M0 0h16v16H0z" fill="#b5aebd" stroke="none" />
          <path d="M2 3l12 10M3 13L13 3" stroke="#ece7f1" />
          <path d="M2 2h3v3H2zM10 3h3v3h-3zM6 7h3v3H6zM3 12h3v2H3z" fill="#706a7c" stroke="none" />
        </Icon>
        <span className="mt-[4px] text-[11px] tracking-[-0.2px] [writing-mode:vertical-rl]">Chart Data</span>
      </SideTab>
    </div>
  </>
)

const Skip = ({ bar = false, flip = false, dark = false }) => (
  <svg
    className={clsx("h-[7px] w-[7px]", flip && "-scale-x-100")}
    viewBox="0 0 7 7"
    fill={dark ? "#08050d" : "#b3adbd"}
  >
    {bar && <path d="M0 0h1.500v7H0z" />}
    <path d="M6.500 0v7L2 3.500z" />
  </svg>
)

const ZoomButton = ({ plus = false }: { plus?: boolean }) => (
  <svg className="size-[14px]" viewBox="0 0 14 14" fill="none" stroke="#8d96a8">
    <circle cx="7" cy="7" r="6.300" fill="#e8edf6" />
    <path d={plus ? "M3.500 7h7M7 3.500v7" : "M3.500 7h7"} stroke="#4d6079" strokeWidth="1.300" />
  </svg>
)

const StatusBar = () => (
  <div className="flex h-[17px] items-center border-t border-[#8f93a3] bg-gradient-to-b from-[#f0e6f5] to-[#f8e9f8] pt-[3px] pl-[35px] text-[10px]">
    <Slot className="w-[18px]"><Skip bar /></Slot>
    <Slot className="w-[18px]"><Skip /></Slot>
    <Sep className="w-[6px]" />
    <Slot className="w-[61px] tracking-[-0.35px]">1 of 1</Slot>
    <Sep className="w-[4px]" />
    <Slot className="w-[19px]"><Skip flip dark /></Slot>
    <Slot className="w-[19px]"><Skip flip bar /></Slot>
    <Sep className="w-[3px]" />
    <Slot className="w-[19px]">
      <SheetIcon><path d="M1.500 12l2-6 2 6M2.500 10h2M9 7.500h1.500v5M8.500 12.500h4" /></SheetIcon>
    </Slot>
    <Sep className="w-[3px]" />
    <Slot className="w-[19px]"><GearPageIcon /></Slot>
    <div className="ml-[3px] w-[503px] shrink-0 text-[9.5px] tracking-[-0.44px] whitespace-nowrap text-[#2a2532]">
      <b className="font-semibold">Click</b> to select. <b className="font-semibold">Ctrl-click</b> select within
      group. <b className="font-semibold">Drag</b> marquee select.{" "}
      <b className="font-semibold">Alt-Drag</b> lasso select.
    </div>
    <Sep className="w-[5px]" />
    <Label className="ml-[2px] w-[88px] text-[9.5px] tracking-[-0.7px]">24.272, 22.452 cm</Label>
    <Sep className="w-[3px]" />
    <Slot className="w-[18px] border border-[#6fb4ca] bg-[#c5e6f1]">
      <Icon className="size-[14px]">
        <path d="M2 2h12v12H2z" stroke="#5b8a9f" strokeDasharray="2 1.500" />
        <circle cx="8" cy="7" r="3" stroke="#668291" />
        <path d="M10 9l3 4" stroke="#668291" />
      </Icon>
    </Slot>
    <Slot className="w-[22px]">
      <Icon className="size-[15px]">
        <circle cx="6.500" cy="6.500" r="5" fill="#c8ddf1" stroke="#7e8291" strokeWidth="1.500" />
        <path d="M10 10l4 5" stroke="#665463" strokeWidth="3" />
      </Icon>
    </Slot>
    <Slot className="w-[18px]">
      <Icon className="size-[15px]">
        <path
          d="M4 15L1 9l1.500-1L4 9.500V3h1.500v4V1H7v6l.8-6.500h1.500V7l1.200-5H12v6l1.500-2.500L15 6l-3 9z"
          fill="#f2b172"
          stroke="#c87a3a"
        />
      </Icon>
    </Slot>
    <Sep className="w-[3px]" />
    <Label className="ml-[6px] w-[24px] text-[10.5px] tracking-[-0.2px]">54%</Label>
    <Slot className="ml-[8px] w-[24px]"><ZoomButton /></Slot>
    <svg className="h-3 w-[100px] shrink-0" viewBox="0 0 100 12" fill="none" stroke="#aaa3b4">
      <path d="M0 6h100M28 2v8" />
      <path d="M12 1.500h6V8l-3 3-3-3z" fill="#f4edf8" stroke="#6f6a7a" />
    </svg>
    <Slot className="w-[20px]"><ZoomButton plus /></Slot>
    <Sep className="w-[4px]" />
    <Slot className="w-[14px]">
      <Icon className="size-[13px]">
        <path d="M1.500 1.500h5v5h-5zM9.500 1.500h5v5h-5zM1.500 9.500h5v5h-5zM9.500 9.500h5v5h-5z" fill="#e5e0df" stroke="#a8a29c" />
      </Icon>
    </Slot>
    <Tri className="w-[12px]" />
    <Sep className="w-[3px]" />
    <Slot className="w-[16px] text-[14px]/[12px] font-bold text-[#77717f]">¶</Slot>
    <Tri className="w-[8px]" />
    <svg className="mr-px ml-auto size-[6px] shrink-0" viewBox="0 0 6 6" fill="#a49dae">
      <path d="M4 0h2v2H4zM4 4h2v2H4zM0 4h2v2H0z" />
    </svg>
  </div>
)

const App = () => (
  <div className="flex h-[720px] w-[1280px] overflow-hidden bg-black pl-[66px] font-['Open_Sans','Noto_Sans',sans-serif] text-[11px]/[14px] text-[#1c1825]">
    <div className="flex w-[1148px] flex-col bg-[#f9f2fe]">
      <MenuBar />
      <MainToolbar />
      <SetupToolbar />
      <div className="flex h-[612px] pl-[2px]">
        <ToolBox />
        <AssetsPanel />
        <Splitter />
        <Workspace />
        <Splitter right />
        <RightDock />
      </div>
      <div className="flex h-[19px] pl-[39px]">
        <div className="flex w-[69px] items-center border border-b-0 border-[#958ea3] bg-[#e4dcef] pb-[2px] pl-[5px] tracking-[-0.25px]">
          <Icon className="mr-[3px] size-[14px]">
            <path d="M2 2.500h12v12H2z" fill="#f8f6f5" stroke="#8e877f" strokeWidth="1.500" />
            <path d="M6 1h4v3H6z" fill="#b9ac98" stroke="#8b806e" />
            <path d="M5 9l2.500 2.500L11 7" stroke="#938b95" />
          </Icon>
          Preflight
        </div>
      </div>
      <StatusBar />
    </div>
  </div>
)

export default App
